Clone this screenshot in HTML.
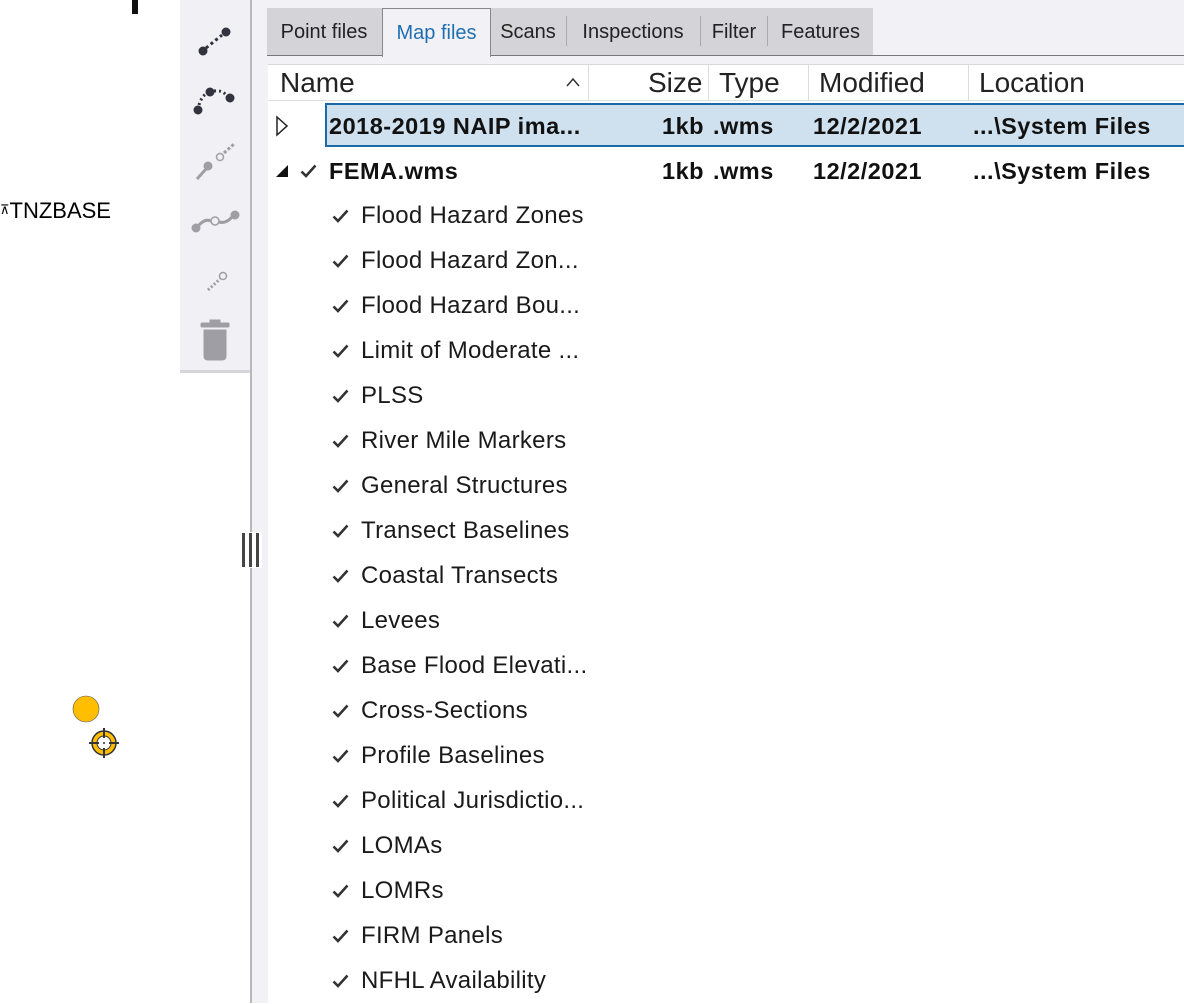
<!DOCTYPE html>
<html><head><style>
body{margin:0;width:1184px;height:1003px;position:relative;overflow:hidden;background:#fff;font-family:"Liberation Sans",sans-serif;color:#111}
.abs{position:absolute}
.tab{position:absolute;top:8px;height:47px;line-height:48px;font-size:20px;color:#222;text-align:center}
.sep{position:absolute;top:16px;width:1px;height:30px;background:#aaa}
.row{position:absolute;left:361px;font-size:24px;letter-spacing:0.3px;color:#1a1a1a;height:30px;line-height:30px}
.ck{position:absolute;left:332px;width:17px;height:14px}
.hd{position:absolute;top:66px;font-size:28px;color:#222;line-height:34px}
.b{font-weight:bold;font-size:23.5px;letter-spacing:0.5px;position:absolute;line-height:30px}
</style></head><body>
<svg width="0" height="0" style="position:absolute"><defs><symbol id="c" viewBox="0 0 17 14"><path d="M1.5 7.5 L6 12 L15.5 1.5" fill="none" stroke="#333" stroke-width="2.6"/></symbol></defs></svg>
<div class="abs" style="left:132px;top:0;width:6px;height:14px;background:#111"></div>
<div class="abs" style="left:0;top:198px;font-size:22px;color:#000"><span style="font-size:13px;vertical-align:4px">⊼</span>TNZBASE</div>
<div class="abs" style="left:180px;top:0;width:70px;height:370px;background:#f1f1f5;border-bottom:3px solid #d6d6da"></div>
<svg class="abs" style="left:180px;top:0" width="70" height="370">
<g fill="#33333f" stroke="#33333f"><circle cx="46" cy="32" r="4"/><circle cx="23" cy="51" r="4"/><line x1="26" y1="48" x2="42" y2="35" stroke-width="3" stroke-dasharray="3,3"/>
<circle cx="18" cy="110" r="4"/><circle cx="30" cy="92" r="4"/><circle cx="50" cy="98" r="4"/><path d="M19 105 Q22 95 28 93 M34 91 Q42 90 46 95" fill="none" stroke-width="3" stroke-dasharray="2,3"/></g>
<g fill="#9e9ea4" stroke="#9e9ea4"><circle cx="28" cy="166" r="4"/><line x1="17" y1="179" x2="26" y2="169" stroke-width="3"/><circle cx="40" cy="157" r="3.5" fill="none" stroke-width="1.5"/><line x1="44" y1="153" x2="54" y2="144" stroke-width="3" stroke-dasharray="3,2"/>
<circle cx="16" cy="228" r="4"/><circle cx="55" cy="215" r="4"/><circle cx="35" cy="221" r="4" fill="none" stroke-width="1.5"/><path d="M18 226 Q25 218 31 221 M39 222 Q46 224 52 217" fill="none" stroke-width="3"/>
<circle cx="43" cy="276" r="3.5" fill="none" stroke-width="1.5"/><line x1="28" y1="290" x2="40" y2="279" stroke-width="3" stroke-dasharray="2,2"/>
<rect x="21" y="323" width="28" height="4" rx="1"/><rect x="30" y="320" width="10" height="4"/><path d="M24 330 H46 V356 Q46 360 42 360 H28 Q24 360 24 356Z"/></g>
</svg>
<div class="abs" style="left:250px;top:0;width:2px;height:1003px;background:#b8b8bc"></div>
<div class="abs" style="left:252px;top:0;width:932px;height:1003px;background:#f2f2f6"></div>
<div class="abs" style="left:242px;top:532px;width:20px;height:36px;background:#fff"></div>
<div class="abs" style="left:242px;top:533px;width:3px;height:34px;background:#444"></div>
<div class="abs" style="left:249px;top:533px;width:3px;height:34px;background:#444"></div>
<div class="abs" style="left:256px;top:533px;width:3px;height:34px;background:#444"></div>
<div class="abs" style="left:267px;top:8px;width:606px;height:47px;background:#d4d4d8"></div>
<div class="abs" style="left:267px;top:55px;width:917px;height:1px;background:#777"></div>
<div class="tab" style="left:267px;width:114px">Point files</div>
<div class="tab" style="left:382px;width:107px;background:#f2f2f6;border:1px solid #888;border-bottom:none;top:8px;height:48px;color:#1f6fb0">Map files</div>
<div class="tab" style="left:490px;width:76px">Scans</div>
<div class="sep" style="left:566px"></div>
<div class="tab" style="left:567px;width:132px">Inspections</div>
<div class="sep" style="left:700px"></div>
<div class="tab" style="left:701px;width:66px">Filter</div>
<div class="sep" style="left:767px"></div>
<div class="tab" style="left:768px;width:105px">Features</div>
<div class="abs" style="left:268px;top:64px;width:916px;height:939px;background:#fff;border-top:1px solid #d8d8dc"></div>
<div class="abs" style="left:268px;top:100px;width:916px;height:1px;background:#e0e0e4"></div>
<div class="abs" style="left:588px;top:65px;width:1px;height:35px;background:#ddd"></div>
<div class="abs" style="left:708px;top:65px;width:1px;height:35px;background:#ddd"></div>
<div class="abs" style="left:808px;top:65px;width:1px;height:35px;background:#ddd"></div>
<div class="abs" style="left:968px;top:65px;width:1px;height:35px;background:#ddd"></div>
<div class="hd" style="left:280px">Name</div>
<svg class="abs" style="left:565px;top:76px" width="16" height="12"><path d="M2 10 L8 3 L14 10" fill="none" stroke="#333" stroke-width="1.5"/></svg>
<div class="hd" style="left:648px">Size</div>
<div class="hd" style="left:719px">Type</div>
<div class="hd" style="left:819px">Modified</div>
<div class="hd" style="left:979px">Location</div>
<div class="abs" style="left:325px;top:103px;width:859px;height:40px;background:#cfe0ee;border:2px solid #1a6aa8;border-right:none"></div>
<svg class="abs" style="left:275px;top:115px" width="14" height="22"><path d="M2 2 L12 11 L2 20 Z" fill="none" stroke="#222" stroke-width="1.5"/></svg>
<div class="b" style="left:329px;top:111px">2018-2019 NAIP ima...</div>
<div class="b" style="left:662px;top:111px">1kb</div>
<div class="b" style="left:713px;top:111px">.wms</div>
<div class="b" style="left:813px;top:111px">12/2/2021</div>
<div class="b" style="left:973px;top:111px">...\System Files</div>
<svg class="abs" style="left:275px;top:164px" width="14" height="14"><path d="M13 1 L13 13 L1 13 Z" fill="#111"/></svg>
<svg class="ck" style="left:300px;top:164px"><use href="#c"/></svg>
<div class="b" style="left:329px;top:156px">FEMA.wms</div>
<div class="b" style="left:662px;top:156px">1kb</div>
<div class="b" style="left:713px;top:156px">.wms</div>
<div class="b" style="left:813px;top:156px">12/2/2021</div>
<div class="b" style="left:973px;top:156px">...\System Files</div>
<svg class="ck" style="top:209px"><use href="#c"/></svg><div class="row" style="top:201px">Flood Hazard Zones</div>
<svg class="ck" style="top:254px"><use href="#c"/></svg><div class="row" style="top:246px">Flood Hazard Zon...</div>
<svg class="ck" style="top:299px"><use href="#c"/></svg><div class="row" style="top:291px">Flood Hazard Bou...</div>
<svg class="ck" style="top:344px"><use href="#c"/></svg><div class="row" style="top:336px">Limit of Moderate ...</div>
<svg class="ck" style="top:389px"><use href="#c"/></svg><div class="row" style="top:381px">PLSS</div>
<svg class="ck" style="top:434px"><use href="#c"/></svg><div class="row" style="top:426px">River Mile Markers</div>
<svg class="ck" style="top:479px"><use href="#c"/></svg><div class="row" style="top:471px">General Structures</div>
<svg class="ck" style="top:524px"><use href="#c"/></svg><div class="row" style="top:516px">Transect Baselines</div>
<svg class="ck" style="top:569px"><use href="#c"/></svg><div class="row" style="top:561px">Coastal Transects</div>
<svg class="ck" style="top:614px"><use href="#c"/></svg><div class="row" style="top:606px">Levees</div>
<svg class="ck" style="top:659px"><use href="#c"/></svg><div class="row" style="top:651px">Base Flood Elevati...</div>
<svg class="ck" style="top:704px"><use href="#c"/></svg><div class="row" style="top:696px">Cross-Sections</div>
<svg class="ck" style="top:749px"><use href="#c"/></svg><div class="row" style="top:741px">Profile Baselines</div>
<svg class="ck" style="top:794px"><use href="#c"/></svg><div class="row" style="top:786px">Political Jurisdictio...</div>
<svg class="ck" style="top:839px"><use href="#c"/></svg><div class="row" style="top:831px">LOMAs</div>
<svg class="ck" style="top:884px"><use href="#c"/></svg><div class="row" style="top:876px">LOMRs</div>
<svg class="ck" style="top:929px"><use href="#c"/></svg><div class="row" style="top:921px">FIRM Panels</div>
<svg class="ck" style="top:974px"><use href="#c"/></svg><div class="row" style="top:966px">NFHL Availability</div>
<svg class="abs" style="left:70px;top:695px" width="60" height="70">
<circle cx="16" cy="14" r="13" fill="#ffbe00" stroke="#555" stroke-width="0.6"/>
<circle cx="34" cy="48" r="12" fill="#ffbe00" stroke="#333" stroke-width="1.5"/>
<circle cx="34" cy="48" r="7" fill="#fff" stroke="#333" stroke-width="1"/>
<line x1="34" y1="33" x2="34" y2="43" stroke="#333" stroke-width="2"/><line x1="34" y1="53" x2="34" y2="63" stroke="#333" stroke-width="2"/>
<line x1="19" y1="48" x2="29" y2="48" stroke="#333" stroke-width="2"/><line x1="39" y1="48" x2="49" y2="48" stroke="#333" stroke-width="2"/>
<circle cx="34" cy="48" r="1" fill="#333"/>
</svg>
</body></html>
